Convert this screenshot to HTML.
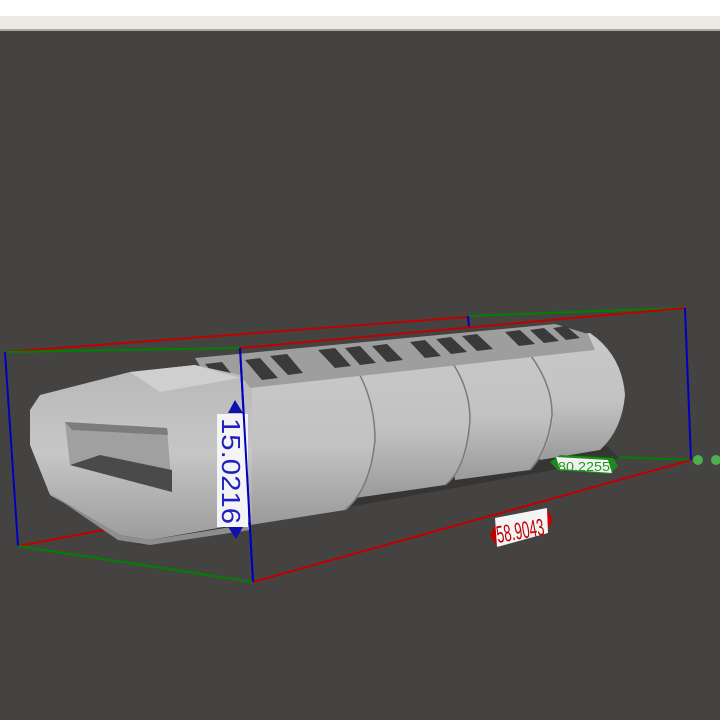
<!DOCTYPE html>
<html><head><meta charset="utf-8"><style>
html,body{margin:0;padding:0;width:720px;height:720px;overflow:hidden;background:#444341}
</style></head><body>
<svg width="720" height="720" viewBox="0 0 720 720" xmlns="http://www.w3.org/2000/svg">
<defs>
<linearGradient id="g1" x1="0" y1="0" x2="0" y2="1">
<stop offset="0" stop-color="#b8b8b8"/><stop offset="0.5" stop-color="#c6c6c6"/><stop offset="1" stop-color="#9c9c9c"/>
</linearGradient>
<linearGradient id="g2" x1="0" y1="0" x2="0" y2="1">
<stop offset="0" stop-color="#c9c9c9"/><stop offset="0.55" stop-color="#c2c2c2"/><stop offset="1" stop-color="#9a9a9a"/>
</linearGradient>
</defs>
<rect x="0" y="0" width="720" height="16" fill="#ffffff"/>
<rect x="0" y="16" width="720" height="13" fill="#ece8e3"/>
<rect x="0" y="29" width="720" height="2" fill="#a9a7a2"/>
<rect x="0" y="31" width="720" height="689" fill="#444341"/>

<line x1="5" y1="352" x2="468" y2="317" stroke="#c00000" stroke-width="2"/>
<line x1="468" y1="316" x2="685" y2="308" stroke="#008000" stroke-width="2"/>
<line x1="468" y1="316" x2="469" y2="328" stroke="#0000c0" stroke-width="2"/>
<line x1="18" y1="546" x2="120" y2="527" stroke="#c00000" stroke-width="2"/>
<line x1="691" y1="460" x2="560" y2="455" stroke="#008000" stroke-width="2"/>

<path d="M120 530 L600 440 L620 458 L140 545 Z" fill="#2e2d2c" opacity="0.6"/>

<path d="M520 340 L590 333 Q622 355 625 395 Q622 430 600 450 L540 460 Z" fill="url(#g2)"/>
<path d="M440 345 L530 338 Q555 360 553 410 Q552 450 530 470 L455 480 Z" fill="url(#g2)"/>
<path d="M350 350 L440 343 Q470 370 470 420 Q468 470 445 485 L355 498 Z" fill="url(#g2)"/>
<path d="M250 360 L340 350 Q375 385 375 440 Q370 490 345 510 L250 525 Z" fill="url(#g2)"/>
<path d="M520 342 Q553 380 552 415 Q548 450 530 470" stroke="#7a7a7a" fill="none" stroke-width="1.5"/>
<path d="M440 347 Q470 380 470 420 Q466 470 445 485" stroke="#7a7a7a" fill="none" stroke-width="1.5"/>
<path d="M345 352 Q375 390 375 440 Q370 490 345 510" stroke="#7a7a7a" fill="none" stroke-width="1.5"/>
<path d="M195 358 L555 324 L588 334 L595 350 L250 388 L212 386 Z" fill="#9e9e9e"/>
<g fill="#3a3a3a">
<path d="M205 364 L222 362 L238 382 L222 384 Z"/>
<path d="M245 360 L260 358 L278 378 L262 380 Z"/>
<path d="M270 356 L287 354 L303 373 L288 375 Z"/>
<path d="M318 350 L335 348 L351 366 L335 368 Z"/>
<path d="M345 348 L360 346 L376 363 L360 365 Z"/>
<path d="M372 346 L387 344 L403 360 L387 362 Z"/>
<path d="M410 342 L425 340 L441 356 L425 358 Z"/>
<path d="M436 339 L451 337 L467 352 L451 354 Z"/>
<path d="M462 336 L477 334 L493 349 L477 351 Z"/>
<path d="M505 332 L520 330 L535 344 L519 346 Z"/>
<path d="M530 330 L544 328 L559 341 L544 343 Z"/>
<path d="M553 328 L566 326 L580 338 L566 340 Z"/>
</g>
<path d="M30 410 L40 395 L130 372 L195 365 L240 375 L252 390 L252 522 L150 540 L120 535 L50 495 L30 445 Z" fill="url(#g1)"/>
<path d="M130 372 L195 365 L240 378 L160 392 Z" fill="#cfcfcf"/>
<path d="M48 492 L120 535 L150 540 L250 524 L250 530 L150 545 L118 540 Z" fill="#8e8e8e"/>
<path d="M65 422 L167 428 L172 492 L70 465 Z" fill="#a0a0a0"/>
<path d="M70 465 L172 492 L172 470 L100 455 Z" fill="#4a4a4a"/>
<path d="M65 422 L167 428 L168 435 L72 430 Z" fill="#7c7c7c"/>

<line x1="5" y1="352" x2="240" y2="348" stroke="#008000" stroke-width="2"/>
<line x1="240" y1="348" x2="685" y2="308" stroke="#c00000" stroke-width="2"/>
<line x1="5" y1="352" x2="18" y2="546" stroke="#0000c0" stroke-width="2"/>
<line x1="240" y1="348" x2="253" y2="582" stroke="#0000c0" stroke-width="2"/>
<line x1="685" y1="308" x2="691" y2="460" stroke="#0000c0" stroke-width="2"/>
<line x1="18" y1="546" x2="253" y2="582" stroke="#008000" stroke-width="2"/>
<line x1="253" y1="582" x2="691" y2="460" stroke="#c00000" stroke-width="2"/>

<polygon points="228,413 235,400 243,413" fill="#1010b0"/>
<polygon points="228,527 243,527 236,539" fill="#1010b0"/>
<rect x="217" y="414" width="31" height="113" fill="#f4f4f4"/>
<line x1="240" y1="348" x2="253" y2="582" stroke="#0000c0" stroke-width="2"/>
<text x="0" y="0" transform="translate(222,418) rotate(90)" font-family="Liberation Sans, sans-serif" font-size="26" fill="#2020c0" textLength="106" lengthAdjust="spacingAndGlyphs">15.0216</text>

<polygon points="550,462 560,455 613,458 618,466 610,474 558,470" fill="#1d8a1d"/>
<polygon points="556,457 608,460 612,473 560,469" fill="#f2f2f2"/>
<text x="558" y="471" font-family="Liberation Sans, sans-serif" font-size="13" fill="#1d9a1d" textLength="52" lengthAdjust="spacingAndGlyphs">80.2255</text>

<polygon points="490,535 497,522 497,547" fill="#c00000"/>
<polygon points="553,520 546,507 546,532" fill="#c00000"/>
<polygon points="495,518 547,508 548,533 497,547" fill="#f4f4f4"/>
<text x="0" y="0" transform="translate(498,543) rotate(-10)" font-family="Liberation Sans, sans-serif" font-size="24" fill="#c00000" textLength="48" lengthAdjust="spacingAndGlyphs">58.9043</text>

<circle cx="698" cy="460" r="5" fill="#4caf50"/>
<circle cx="716" cy="460" r="5" fill="#4caf50"/>
</svg>
</body></html>
